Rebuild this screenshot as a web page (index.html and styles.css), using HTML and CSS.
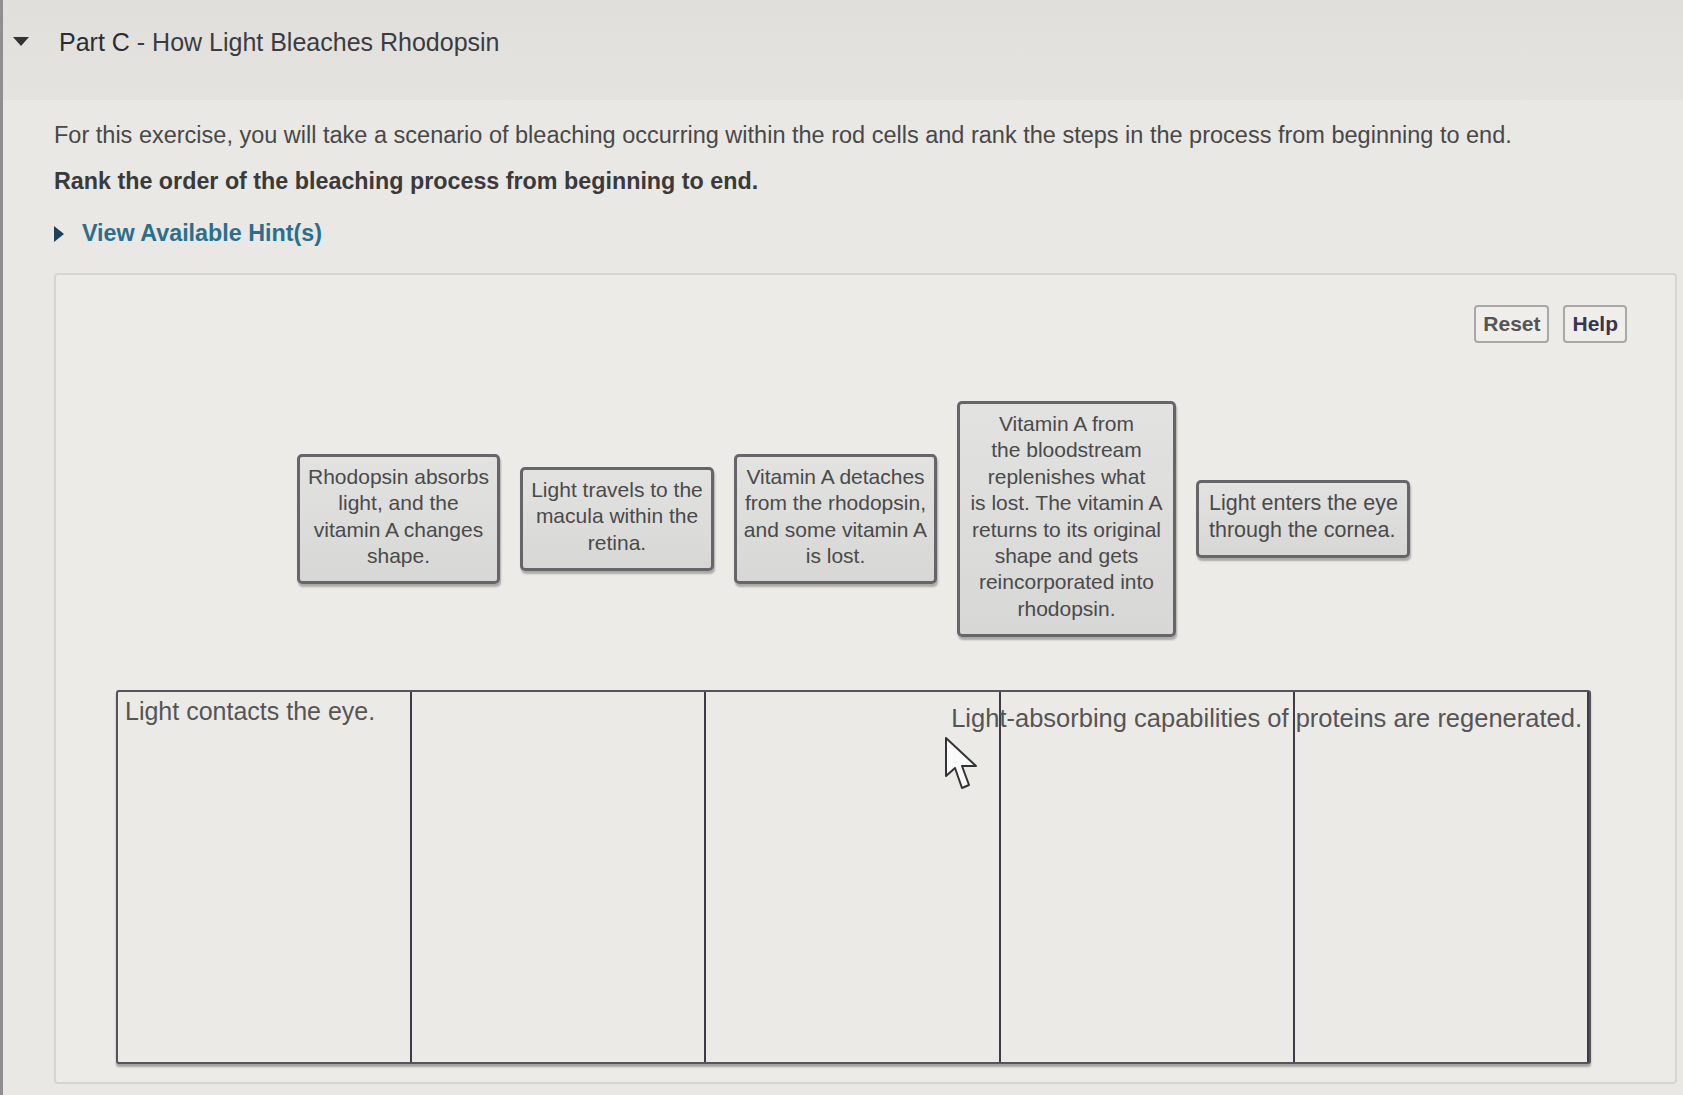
FILE: index.html
```html
<!DOCTYPE html>
<html lang="en">
<head>
  <meta charset="UTF-8">
  <title>Part C - How Light Bleaches Rhodopsin</title>
  <link rel="stylesheet" href="styles.css">
</head>
<body>
  <div class="page">
    <header class="part-header">
      <svg class="caret" width="16" height="10" viewBox="0 0 16 10"><path d="M0 0 L16 0 L8 9 Z" fill="#333"/></svg>
      <h1><b>Part C</b> - How Light Bleaches Rhodopsin</h1>
    </header>

    <section class="part-body">
      <p class="intro">For this exercise, you will take a scenario of bleaching occurring within the rod cells and rank the steps in the process from beginning to end.</p>
      <p class="task">Rank the order of the bleaching process from beginning to end.</p>
      <a class="hints" href="#">
        <svg width="10" height="16" viewBox="0 0 10 16"><path d="M0 0 L10 8 L0 16 Z" fill="#1b3f57"/></svg>
        View Available Hint(s)
      </a>

      <div class="activity">
        <div class="toolbar">
          <button class="tool-btn">Reset</button>
          <button class="tool-btn help">Help</button>
        </div>

        <div class="cards">
          <div class="card">Rhodopsin absorbs<br>light, and the<br>vitamin A changes<br>shape.</div>
          <div class="card w-narrow">Light travels to the<br>macula within the<br>retina.</div>
          <div class="card">Vitamin A detaches<br>from the rhodopsin,<br>and some vitamin A<br>is lost.</div>
          <div class="card w-tall">Vitamin A from<br>the bloodstream<br>replenishes what<br>is lost. The vitamin A<br>returns to its original<br>shape and gets<br>reincorporated into<br>rhodopsin.</div>
          <div class="card w-wide">Light enters the eye<br>through the cornea.</div>
        </div>

        <div class="ranking">
          <div class="slot"><span class="label-start">Light contacts the eye.</span></div>
          <div class="slot"></div>
          <div class="slot"></div>
          <div class="slot"></div>
          <div class="slot"><span class="label-end">Light-absorbing capabilities of proteins are regenerated.</span></div>
          <svg class="pointer" width="36" height="56" viewBox="0 0 36 56">
            <path d="M2 2 L2 40 L11 32 L18 52 L25 49 L18 30 L32 30 Z" fill="#fafafa" stroke="#333" stroke-width="2" stroke-linejoin="round"/>
          </svg>
        </div>
      </div>
    </section>
  </div>
</body>
</html>
```

FILE: styles.css
```css
body {
  margin: 0;
  background: #e9e8e4;
  font-family: "Liberation Sans", Arial, sans-serif;
  color: #3d3d3d;
}
.page {
  border-left: 3px solid #8f8f8f;
  min-height: 1095px;
  box-sizing: border-box;
}
.part-header {
  display: flex;
  align-items: center;
  height: 100px;
  padding: 0 0 16px 10px;
  box-sizing: border-box;
  background: linear-gradient(180deg, #e0dfdb, #e4e3df);
}
.part-header .caret {
  margin-right: 30px;
}
.part-header h1 {
  margin: 0;
  font-size: 25px;
  font-weight: normal;
  color: #3b3b40;
}
.part-header h1 b {
  font-weight: normal;
  color: #2c2c34;
}
.part-body {
  padding: 22px 6px 0 51px;
}
.intro {
  margin: 0;
  font-size: 23.5px;
  color: #484848;
}
.task {
  margin: 19px 0 0;
  font-size: 23.3px;
  font-weight: bold;
  color: #3a3a3a;
}
.hints {
  display: inline-flex;
  align-items: center;
  gap: 18px;
  margin-top: 25px;
  font-size: 23.3px;
  font-weight: bold;
  color: #2a6f8c;
  text-decoration: none;
}
.activity {
  margin-top: 26px;
  border: 2px solid #d6d5d1;
  border-radius: 4px;
  background: #ecebe7;
  padding: 30px 48px 22px 64px;
  height: 811px;
  box-sizing: border-box;
}
.toolbar {
  display: flex;
  justify-content: flex-end;
  gap: 14px;
}
.tool-btn {
  font-family: "Liberation Sans", Arial, sans-serif;
  font-size: 21px;
  font-weight: bold;
  color: #555;
  background: #efeeea;
  border: 2px solid #a9a8a5;
  border-radius: 4px;
  padding: 5px 7px;
}
.tool-btn.help {
  color: #3a3450;
}
.cards {
  display: flex;
  justify-content: center;
  align-items: center;
  gap: 20px;
  margin: 58px 0 0 -40px;
}
.card {
  width: 203px;
  box-sizing: border-box;
  padding: 7px 4px 12px;
  text-align: center;
  font-size: 21px;
  line-height: 26.4px;
  color: #4a4a4a;
  background: linear-gradient(180deg, #e2e2e1, #d7d7d6);
  border: 3px solid #66656a;
  border-radius: 5px;
  box-shadow: 1px 3px 2px rgba(0, 0, 0, 0.28);
  white-space: nowrap;
}
.card.w-narrow {
  width: 194px;
}
.card.w-tall {
  width: 219px;
}
.card.w-wide {
  width: 214px;
  font-size: 21.5px;
  text-align: left;
  padding-left: 10px;
}
.ranking {
  position: relative;
  display: grid;
  grid-template-columns: repeat(5, 1fr);
  width: 1475px;
  height: 374px;
  margin: 53px 0 0 -4px;
  border: 2px solid #55535c;
  border-radius: 3px;
  background: #ebeae6;
  box-shadow: 0 3px 2px rgba(0, 0, 0, 0.3);
  box-sizing: border-box;
}
.slot {
  position: relative;
  border-right: 2px solid #3e3a48;
}
.slot:last-child {
  border-right: none;
}
.label-start,
.label-end {
  position: absolute;
  top: 5px;
  font-size: 25px;
  color: #555;
  white-space: nowrap;
}
.label-start {
  left: 7px;
}
.label-end {
  right: 5px;
  top: 12px;
  font-size: 25.5px;
}
.pointer {
  position: absolute;
  left: 826px;
  top: 44px;
}
```
